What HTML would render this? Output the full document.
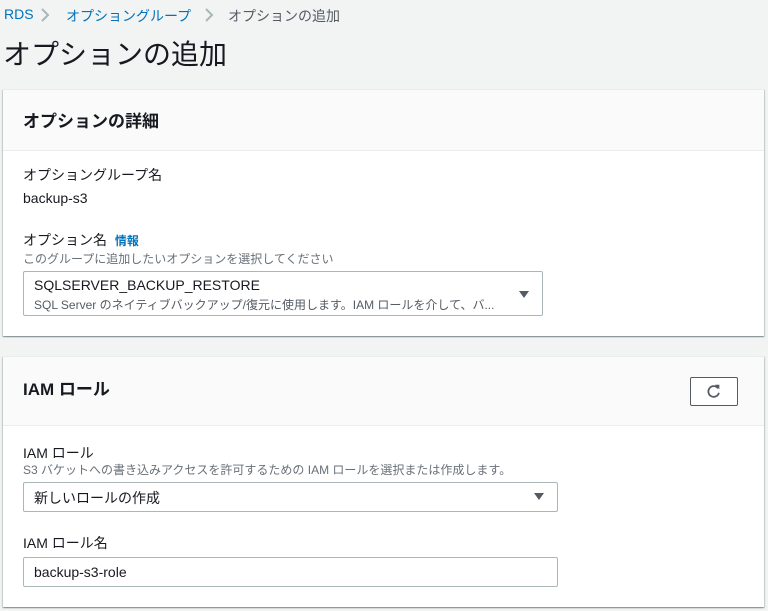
<!DOCTYPE html>
<html><head><meta charset="utf-8"><style>
*{box-sizing:border-box;margin:0;padding:0}
body{width:768px;height:611px;overflow:hidden;background:#f2f3f3;font-family:"Liberation Sans","Noto Sans CJK JP",sans-serif;color:#16191f;position:relative}
.a{position:absolute;white-space:nowrap}
.panel{position:absolute;left:3px;width:761px;background:#fff;box-shadow:0 1px 1px 0 rgba(0,28,36,.3),1px 1px 1px 0 rgba(0,28,36,.15),-1px 1px 1px 0 rgba(0,28,36,.15);border-top:1px solid #eaeded}
.hd{position:absolute;left:0;top:0;width:100%;background:#fafafa;border-bottom:1px solid #eaeded}
.lbl{font-size:14px;color:#16191f}
.desc{font-size:12px;color:#687078}
.box{position:absolute;border:1px solid #aab7b8;border-radius:2px;background:#fff}
.tri{position:absolute;width:0;height:0;border-left:5px solid transparent;border-right:5px solid transparent;border-top:7px solid #545b64}
</style></head><body>
<div class="a" style="left:4px;top:6px;font-size:14px;color:#0073bb">RDS</div>
<svg class="a" style="left:40px;top:8px" width="10" height="14"><path d="M2 1l6 6-6 6" stroke="#aab7b8" stroke-width="2" fill="none"/></svg>
<div class="a" style="left:66px;top:6px;font-size:14px;color:#0073bb">オプショングループ</div>
<svg class="a" style="left:204px;top:8px" width="10" height="14"><path d="M2 1l6 6-6 6" stroke="#aab7b8" stroke-width="2" fill="none"/></svg>
<div class="a" style="left:228px;top:6px;font-size:14px;color:#545b64">オプションの追加</div>
<div class="a" style="left:3px;top:33px;font-size:28px;color:#16191f">オプションの追加</div>

<div class="panel" style="top:89px;height:247px">
  <div class="hd" style="height:61px"></div>
  <div class="a" style="left:20px;top:17px;font-size:17px;font-weight:bold">オプションの詳細</div>
  <div class="a lbl" style="left:20px;top:75px">オプショングループ名</div>
  <div class="a lbl" style="left:20px;top:100px">backup-s3</div>
  <div class="a lbl" style="left:20px;top:140px">オプション名 <span style="color:#0073bb;font-size:12px;font-weight:bold;margin-left:4px">情報</span></div>
  <div class="a desc" style="left:20px;top:160px">このグループに追加したいオプションを選択してください</div>
  <div class="box" style="left:20px;top:181px;width:520px;height:45px">
    <div class="a" style="left:10px;top:5px;font-size:14px">SQLSERVER_BACKUP_RESTORE</div>
    <div class="a desc" style="left:10px;top:24px;color:#545b64">SQL Server のネイティブバックアップ/復元に使用します。IAM ロールを介して、バ...</div>
    <div class="tri" style="left:495px;top:19px"></div>
  </div>
</div>

<div class="panel" style="top:356px;height:251px">
  <div class="hd" style="height:69px"></div>
  <div class="a" style="left:20px;top:18px;font-size:17px;font-weight:bold">IAM ロール</div>
  <div class="box" style="left:687px;top:20px;width:48px;height:29px;border-color:#545b64">
    <svg style="position:absolute;left:15px;top:5px" width="16" height="16" viewBox="0 0 18 18"><path d="M13.5 6A6 6 0 1 0 14.5 11" stroke="#545b64" stroke-width="2" fill="none"/><path d="M10 2h5v5z" fill="#545b64"/></svg>
  </div>
  <div class="a lbl" style="left:20px;top:86px">IAM ロール</div>
  <div class="a desc" style="left:20px;top:104px">S3 バケットへの書き込みアクセスを許可するための IAM ロールを選択または作成します。</div>
  <div class="box" style="left:20px;top:125px;width:535px;height:30px">
    <div class="a" style="left:10px;top:5px;font-size:14px">新しいロールの作成</div>
    <div class="tri" style="left:510px;top:10px"></div>
  </div>
  <div class="a lbl" style="left:20px;top:176px">IAM ロール名</div>
  <div class="box" style="left:20px;top:200px;width:535px;height:30px">
    <div class="a" style="left:10px;top:6px;font-size:14px">backup-s3-role</div>
  </div>
</div>
</body></html>
